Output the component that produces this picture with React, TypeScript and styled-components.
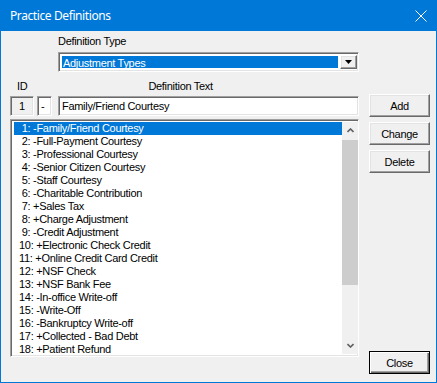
import React from 'react'
import styled, { createGlobalStyle } from 'styled-components'

const GlobalStyle = createGlobalStyle`
  html, body {
    margin: 0;
    padding: 0;
    background: #f0f0f0;
  }
  * {
    box-sizing: border-box;
  }
`

const definitions = [
  '-Family/Friend Courtesy',
  '-Full-Payment Courtesy',
  '-Professional Courtesy',
  '-Senior Citizen Courtesy',
  '-Staff Courtesy',
  '-Charitable Contribution',
  '+Sales Tax',
  '+Charge Adjustment',
  '-Credit Adjustment',
  '+Electronic Check Credit',
  '+Online Credit Card Credit',
  '+NSF Check',
  '+NSF Bank Fee',
  '-In-office Write-off',
  '-Write-Off',
  '-Bankruptcy Write-off',
  '+Collected - Bad Debt',
  '+Patient Refund',
]

const Window = styled.div`
  width: 437px;
  height: 383px;
  border: 1px solid #0078d7;
  border-top: none;
  background: #f0f0f0;
  display: flex;
  flex-direction: column;
  font-family: 'Liberation Sans', Arial, sans-serif;
  font-size: 11px;
  letter-spacing: -0.3px;
  color: #000;
`

const TitleBar = styled.div`
  height: 31px;
  margin: 0 -1px;
  background: #0078d7;
  display: flex;
  align-items: center;
  justify-content: space-between;
  padding: 0 10px 0 10px;
  flex-shrink: 0;
`

const Title = styled.span`
  font-family: 'Noto Sans', 'Open Sans', sans-serif;
  font-size: 12px;
  letter-spacing: -0.4px;
  color: #fff;
`

const CloseGlyph = styled.svg`
  width: 12px;
  height: 12px;
`

const Body = styled.div`
  flex: 1;
  display: flex;
  gap: 10px;
  padding: 4px 6px 8px 9px;
`

const LeftColumn = styled.div`
  width: 349px;
  display: flex;
  flex-direction: column;
`

const RightColumn = styled.div`
  width: 61px;
  display: flex;
  flex-direction: column;
  gap: 5px;
  padding-top: 59px;
`

const Label = styled.div<{ $indent?: number }>`
  height: 13px;
  line-height: 13px;
  padding-left: ${(p) => p.$indent ?? 0}px;
  white-space: nowrap;
`

const TypeBlock = styled.div`
  padding-left: 48px;
  display: flex;
  flex-direction: column;
  gap: 4px;
`

const sunken = `
  border: 1px solid;
  border-color: #a0a0a0 #fff #fff #a0a0a0;
  box-shadow: inset 1px 1px 0 #696969, inset -1px -1px 0 #e3e3e3;
`

const raised = `
  border: 1px solid;
  border-color: #fff #696969 #696969 #fff;
  box-shadow: inset -1px -1px 0 #a0a0a0, inset 1px 1px 0 #e3e3e3;
`

const Combo = styled.div`
  ${sunken}
  height: 20px;
  background: #fff;
  display: flex;
  align-items: stretch;
  padding: 2px 0 2px 2px;
`

const ComboValue = styled.div`
  flex: 1;
  margin: 1px 2px 1px 1px;
  background: #0078d7;
  color: #fff;
  line-height: 14px;
  padding-left: 1px;
`

const ComboButton = styled.div`
  ${raised}
  width: 17px;
  background: #f0f0f0;
  display: flex;
  align-items: center;
  justify-content: center;
  margin-right: 1px;
`

const HeaderRow = styled.div`
  display: flex;
  margin-top: 8px;
`

const FieldRow = styled.div`
  display: flex;
  margin-top: 3px;
  height: 20px;
`

const Field = styled.div<{ $width?: number; $disabled?: boolean; $center?: boolean }>`
  ${sunken}
  width: ${(p) => (p.$width ? `${p.$width}px` : 'auto')};
  flex: ${(p) => (p.$width ? 'none' : '1')};
  background: ${(p) => (p.$disabled ? '#f0f0f0' : '#fff')};
  line-height: 18px;
  padding-left: ${(p) => (p.$center ? 0 : 3)}px;
  text-align: ${(p) => (p.$center ? 'center' : 'left')};
  white-space: nowrap;
  overflow: hidden;
`

const ListBox = styled.div`
  ${sunken}
  margin-top: 3px;
  height: 238px;
  background: #fff;
  display: flex;
  padding: 2px 0 2px 2px;
`

const Rows = styled.div`
  flex: 1;
  padding-left: 1px;
`

const Row = styled.div<{ $selected?: boolean }>`
  height: 13px;
  line-height: 13px;
  padding-left: 5px;
  white-space: pre;
  background: ${(p) => (p.$selected ? '#0078d7' : 'transparent')};
  color: ${(p) => (p.$selected ? '#fff' : '#000')};
`

const ScrollBar = styled.div`
  width: 16px;
  background: #f0f0f0;
  display: flex;
  flex-direction: column;
`

const ScrollArrow = styled.div`
  height: 17px;
  display: flex;
  align-items: center;
  justify-content: center;
`

const ScrollTrack = styled.div`
  flex: 1;
  padding: 1px 0;
`

const ScrollThumb = styled.div`
  height: 145px;
  background: #cdcdcd;
`

const Button = styled.button<{ $default?: boolean }>`
  ${raised}
  height: 23px;
  width: 100%;
  padding: 0;
  background: #f0f0f0;
  font-family: 'Liberation Sans', Arial, sans-serif;
  font-size: 11px;
  letter-spacing: -0.3px;
  color: #000;
  ${(p) =>
    p.$default &&
    `
    margin-top: auto;
    border: 1px solid #000;
    box-shadow: inset 1px 1px 0 #fff, inset -1px -1px 0 #696969, inset -2px -2px 0 #a0a0a0;
  `}
`

function Chevron({ up }: { up?: boolean }) {
  return (
    <svg width="7" height="5" viewBox="0 0 7 5">
      <polyline
        points={up ? '0.5,4 3.5,1 6.5,4' : '0.5,1 3.5,4 6.5,1'}
        fill="none"
        stroke="#606060"
        strokeWidth="1.6"
      />
    </svg>
  )
}

export default function App() {
  return (
    <>
      <GlobalStyle />
      <Window>
        <TitleBar>
          <Title>Practice Definitions</Title>
          <CloseGlyph viewBox="0 0 12 12">
            <line x1="0.5" y1="0.5" x2="11.5" y2="11.5" stroke="#fff" strokeWidth="1" />
            <line x1="11.5" y1="0.5" x2="0.5" y2="11.5" stroke="#fff" strokeWidth="1" />
          </CloseGlyph>
        </TitleBar>
        <Body>
          <LeftColumn>
            <TypeBlock>
              <Label>Definition Type</Label>
              <Combo>
                <ComboValue>Adjustment Types</ComboValue>
                <ComboButton>
                  <svg width="7" height="4" viewBox="0 0 7 4">
                    <polygon points="0,0 7,0 3.5,4" fill="#000" />
                  </svg>
                </ComboButton>
              </Combo>
            </TypeBlock>
            <HeaderRow>
              <Label $indent={7}>ID</Label>
              <Label $indent={121}>Definition Text</Label>
            </HeaderRow>
            <FieldRow>
              <Field $width={24} $disabled $center>
                1
              </Field>
              <Field $width={15} style={{ marginLeft: 3 }}>
                -
              </Field>
              <Field style={{ marginLeft: 6 }}>Family/Friend Courtesy</Field>
            </FieldRow>
            <ListBox>
              <Rows>
                {definitions.map((d, i) => (
                  <Row key={i} $selected={i === 0}>
                    {`${i < 9 ? ' ' : ''}${i + 1}: ${d}`}
                  </Row>
                ))}
              </Rows>
              <ScrollBar>
                <ScrollArrow>
                  <Chevron up />
                </ScrollArrow>
                <ScrollTrack>
                  <ScrollThumb />
                </ScrollTrack>
                <ScrollArrow>
                  <Chevron />
                </ScrollArrow>
              </ScrollBar>
            </ListBox>
          </LeftColumn>
          <RightColumn>
            <Button>Add</Button>
            <Button>Change</Button>
            <Button>Delete</Button>
            <Button $default>Close</Button>
          </RightColumn>
        </Body>
      </Window>
    </>
  )
}
